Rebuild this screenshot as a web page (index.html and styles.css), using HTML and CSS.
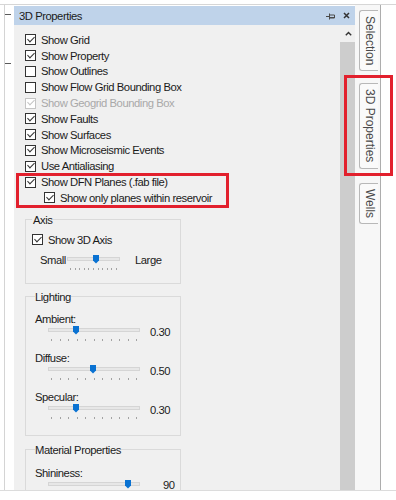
FILE: index.html
```html
<!DOCTYPE html>
<html lang="en">
<head>
  <meta charset="UTF-8" />
  <meta name="viewport" content="width=device-width, initial-scale=1.0" />
  <title>3D Properties</title>
  <link rel="stylesheet" href="styles.css">
</head>
<body>

  <div class="screen">
    <!-- left edge of the host window -->
    <div class="gutter">
      <i class="tick tick-top"></i>
      <i class="tick tick-mid"></i>
    </div>

    <!-- Docked panel -->
    <section class="panel">
      <header class="titlebar">
        <span class="title">3D Properties</span>
        <span class="title-btns">
          <svg class="pin" width="9" height="7" viewBox="0 0 9 7">
            <path d="M0 3.5H3M3.5 0.5V6.5M3.5 2H8.5V5H3.5" fill="none" stroke="#4b4b4b" stroke-width="1"/>
            <path d="M4 4.5H8.5" stroke="#4b4b4b" stroke-width="1"/>
          </svg>
          <svg class="close" width="7" height="7" viewBox="0 0 7 7">
            <path d="M1 1L6 6M6 1L1 6" stroke="#333" stroke-width="1.5"/>
          </svg>
        </span>
      </header>

      <div class="panel-body">
        <div class="props">
          <div class="checks">
            <div class="row"><span class="cb on"></span>Show Grid</div>
            <div class="row"><span class="cb on"></span>Show Property</div>
            <div class="row"><span class="cb"></span>Show Outlines</div>
            <div class="row"><span class="cb"></span>Show Flow Grid Bounding Box</div>
            <div class="row disabled"><span class="cb on"></span>Show Geogrid Bounding Box</div>
            <div class="row"><span class="cb on"></span>Show Faults</div>
            <div class="row"><span class="cb on"></span>Show Surfaces</div>
            <div class="row"><span class="cb on"></span>Show Microseismic Events</div>
            <div class="row"><span class="cb on"></span>Use Antialiasing</div>
            <div class="marked">
              <div class="row"><span class="cb on"></span>Show DFN Planes (.fab file)</div>
              <div class="row sub"><span class="cb on"></span>Show only planes within reservoir</div>
            </div>
          </div>

          <fieldset class="group axis">
            <legend>Axis</legend>
            <div class="row"><span class="cb on"></span>Show 3D Axis</div>
            <div class="slider-row short">
              <span class="end">Small</span>
              <div class="slider" style="width:53px">
                <div class="track"></div>
                <div class="thumb" style="left:26px"></div>
                <div class="ticks"><i></i><i></i><i></i><i></i><i></i><i></i><i></i><i></i><i></i><i></i><i></i></div>
              </div>
              <span class="end large">Large</span>
            </div>
          </fieldset>

          <fieldset class="group lighting">
            <legend>Lighting</legend>
            <div class="label">Ambient:</div>
            <div class="slider-row">
              <div class="slider" style="width:92px">
                <div class="track"></div>
                <div class="thumb" style="left:25px"></div>
                <div class="ticks"><i></i><i></i><i></i><i></i><i></i><i></i><i></i><i></i><i></i><i></i><i></i></div>
              </div>
              <span class="value">0.30</span>
            </div>
            <div class="label">Diffuse:</div>
            <div class="slider-row">
              <div class="slider" style="width:92px">
                <div class="track"></div>
                <div class="thumb" style="left:42px"></div>
                <div class="ticks"><i></i><i></i><i></i><i></i><i></i><i></i><i></i><i></i><i></i><i></i><i></i></div>
              </div>
              <span class="value">0.50</span>
            </div>
            <div class="label">Specular:</div>
            <div class="slider-row">
              <div class="slider" style="width:92px">
                <div class="track"></div>
                <div class="thumb" style="left:25px"></div>
                <div class="ticks"><i></i><i></i><i></i><i></i><i></i><i></i><i></i><i></i><i></i><i></i><i></i></div>
              </div>
              <span class="value">0.30</span>
            </div>
          </fieldset>

          <fieldset class="group material">
            <legend>Material Properties</legend>
            <div class="label">Shininess:</div>
            <div class="slider-row">
              <div class="slider" style="width:92px">
                <div class="track"></div>
                <div class="thumb" style="left:77px"></div>
                <div class="ticks"><i></i><i></i><i></i><i></i><i></i><i></i><i></i><i></i><i></i><i></i><i></i></div>
              </div>
              <span class="value int">90</span>
            </div>
          </fieldset>
        </div>

        <div class="vscroll">
          <div class="vscroll-up">
            <svg width="7" height="5" viewBox="0 0 7 5">
              <path d="M0.8 4.2L3.5 1.5L6.2 4.2" fill="none" stroke="#333" stroke-width="1.4"/>
            </svg>
          </div>
          <div class="vscroll-thumb"></div>
        </div>
      </div>
    </section>

    <!-- Side tabs -->
    <nav class="tabstrip">
      <div class="tab">Selection</div>
      <div class="tab active">3D Properties</div>
      <div class="tab">Wells</div>
    </nav>

    <div class="rest"></div>
  </div>

</body>
</html>
```

FILE: styles.css
```css
:root {
  --panel-bg: #f0f0f0;
  --title-bg: #bfd3ea;
  --text: #1b1b1b;
  --line: #d6d6d6;
  --group-line: #dadada;
  --mark: #e2202d;
  --thumb-blue: #0a72d2;
}

body {
  margin: 0;
  background: #fff;
  color: var(--text);
  font-family: "Liberation Sans", Arial, sans-serif;
  font-size: 11.25px;
  letter-spacing: -0.45px;
}

.screen {
  margin-top: 4px;
  height: 485px;
  border-top: 1px solid var(--line);
  border-bottom: 1px solid #dcdcdc;
  display: flex;
  overflow: hidden;
}

/* left edge */
.gutter {
  width: 9px;
  margin-left: 4px;
  border-left: 1px solid #d4d4d4;
  display: flex;
  flex-direction: column;
}

.tick {
  display: block;
  width: 6px;
  height: 1px;
  background: #5a5a5a;
}

.tick-top { margin-top: 9px; }
.tick-mid { margin-top: 48px; }

/* panel */
.panel {
  width: 341px;
  margin-top: 1px;
  display: flex;
  flex-direction: column;
  background: var(--panel-bg);
}

.titlebar {
  height: 19px;
  flex: none;
  background: var(--title-bg);
  display: flex;
  align-items: center;
  justify-content: space-between;
  padding: 0 5px;
}

.title-btns {
  display: flex;
  align-items: center;
  gap: 8px;
}

.pin { margin-top: 1px; }

.panel-body {
  flex: 1;
  display: flex;
  min-height: 0;
}

.props {
  flex: 1;
  overflow: hidden;
}

.vscroll {
  width: 15px;
  display: flex;
  flex-direction: column;
}

.vscroll-up {
  height: 17px;
  display: flex;
  align-items: center;
  justify-content: center;
  padding-left: 1px;
}

.vscroll-thumb {
  flex: 1;
  background: #cdcdcd;
}

/* checkbox list */
.checks {
  padding: 7px 0 0 11px;
}

.row {
  height: 15.8px;
  display: flex;
  align-items: center;
  gap: 5px;
  white-space: nowrap;
}

.row.sub { padding-left: 19px; }

.cb {
  position: relative;
  flex: none;
  width: 11px;
  height: 11px;
  box-sizing: border-box;
  border: 1px solid #333;
  background: #fff;
}

.cb.on::after {
  content: "";
  position: absolute;
  left: 2.5px;
  top: -0.5px;
  width: 3px;
  height: 6px;
  border: solid #333;
  border-width: 0 1px 1px 0;
  transform: rotate(45deg);
}

.row.disabled { color: #a9a9a9; }
.row.disabled .cb { border-color: #c4c4c4; }
.row.disabled .cb::after { border-color: #c4c4c4; }

.marked { position: relative; }

.marked::after {
  content: "";
  position: absolute;
  left: -9px;
  top: -1px;
  width: 213px;
  height: 35px;
  box-sizing: border-box;
  border: 3px solid var(--mark);
}

/* group boxes */
.group {
  width: 156px;
  box-sizing: border-box;
  margin: 6px 0 0 11px;
  border: 1px solid var(--group-line);
  padding: 8px 9px 6px;
  min-width: 0;
}

.group legend {
  padding: 0;
  line-height: 14px;
}

.group.axis {
  margin-top: 7px;
  padding: 5px 6px 8px;
}

.group.axis legend { padding: 0 1px; }

.group.material { margin-top: 7px; padding-top: 9px; }

.label {
  height: 14px;
  line-height: 14px;
}

.slider-row {
  height: 25px;
  display: flex;
  align-items: flex-start;
  padding-left: 13px;
}

.slider-row.short {
  height: 20px;
  margin-top: 7px;
  padding-left: 0;
}

.end {
  line-height: 10px;
}

.short .end:first-child {
  width: 35px;
  padding-left: 8px;
  box-sizing: border-box;
}

.end.large { margin-left: 15px; }

.slider {
  position: relative;
  flex: none;
}

.track {
  height: 4px;
  margin-top: 2px;
  box-sizing: border-box;
  background: #e7e7e7;
  border: 1px solid #d5d5d5;
}

.thumb {
  position: absolute;
  top: 0;
  width: 6px;
  height: 9px;
  background: var(--thumb-blue);
  clip-path: polygon(0 0, 100% 0, 100% 65%, 50% 100%, 0 65%);
}

.ticks {
  display: flex;
  justify-content: space-between;
  margin-top: 7px;
  padding: 0 3px;
}

.ticks i {
  display: block;
  width: 1px;
  height: 2px;
  background: #a3a3a3;
}

.value {
  margin-left: 10px;
  line-height: 13px;
}

.value.int {
  margin-left: 23px;
  line-height: 10px;
}

/* side tabs */
.tabstrip {
  width: 21px;
  padding: 5px 0 0 4px;
  background: #f7f7f7;
  border-right: 1px solid #adadad;
  display: flex;
  flex-direction: column;
  gap: 12px;
}

.tab {
  position: relative;
  width: 19px;
  box-sizing: border-box;
  padding: 5px 0;
  border: 1px solid #b8b8b8;
  border-right: none;
  border-radius: 3px 0 0 3px;
  background: #fafafa;
  color: #4a4a4a;
  font-size: 12px;
  letter-spacing: 0;
  line-height: 17px;
  writing-mode: vertical-rl;
  text-align: center;
}

.tab.active::after {
  content: "";
  position: absolute;
  left: -16px;
  top: -9px;
  width: 49px;
  height: 101px;
  box-sizing: border-box;
  border: 3px solid var(--mark);
}

.tab:last-child { margin-top: 2px; }

.rest { flex: 1; }
```
